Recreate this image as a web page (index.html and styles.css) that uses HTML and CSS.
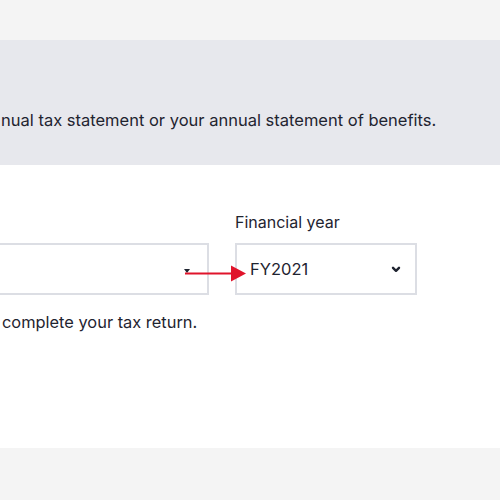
FILE: index.html
```html
<!DOCTYPE html>
<html lang="en">
<head>
<meta charset="utf-8">
<link rel="stylesheet" href="styles.css">
</head>
<body>
<div class="topbar"></div>
<section class="banner">
  <p class="banner-text">nual tax statement or your annual statement of benefits.</p>
</section>
<main class="main">
  <div class="form-row">
    <div class="field field-left">
      <span class="label">&nbsp;</span>
      <div class="select">
        <span class="select-value"></span>
        <span class="caret"></span>
      </div>
    </div>
    <div class="field field-right">
      <span class="label">Financial year</span>
      <div class="select">
        <span class="select-value">FY2021</span>
        <svg class="chevron" width="10" height="7" viewBox="0 0 10 7"><path d="M2 1.8 L5 4.8 L8 1.8" fill="none" stroke="#1f2430" stroke-width="2.4" stroke-linecap="round" stroke-linejoin="round"/></svg>
      </div>
    </div>
    <svg class="arrow" width="62" height="17" viewBox="0 0 62 17"><line x1="0" y1="8.5" x2="47" y2="8.5" stroke="#e0142b" stroke-width="2.2"/><polygon points="46,0.5 61,8.5 46,16.5" fill="#e0142b"/></svg>
  </div>
  <p class="help">complete your tax return.</p>
</main>
<div class="footer"></div>
</body>
</html>
```
FILE: styles.css
```css
html, body {
  margin: 0;
  padding: 0;
  background: #ffffff;
  font-family: Inter, "Noto Sans", sans-serif;
  color: #1f2430;
  overflow: hidden;
}
.topbar {
  height: 40px;
  background: #f4f4f4;
}
.banner {
  height: 125px;
  background: #e7e8ed;
  box-sizing: border-box;
  padding-top: 68px;
}
.banner-text {
  margin: 0;
  padding-left: 1px;
  font-size: 16.5px;
  line-height: 24px;
  white-space: nowrap;
}
.main {
  height: 283px;
  box-sizing: border-box;
  padding-top: 46px;
}
.form-row {
  position: relative;
  display: flex;
  gap: 26px;
  margin-left: -100px;
}
.field {
  display: flex;
  flex-direction: column;
  gap: 10px;
}
.field-left { width: 309px; }
.field-right { width: 182px; }
.label {
  font-size: 16px;
  line-height: 22px;
}
.select {
  height: 52px;
  box-sizing: border-box;
  border: 2px solid #dcdee4;
  display: flex;
  align-items: center;
  justify-content: space-between;
  padding: 0 14px 0 13px;
  font-size: 16.5px;
}
.select-value { line-height: 20px; }
.caret {
  width: 0;
  height: 0;
  border-left: 3px solid transparent;
  border-right: 3px solid transparent;
  border-top: 4px solid #1f2430;
  margin-right: 3px;
  margin-top: 4px;
}
.chevron { display: block; }
.arrow {
  position: absolute;
  left: 285px;
  top: 54px;
}
.help {
  margin: 16px 0 0 2px;
  font-size: 16.4px;
  line-height: 22px;
}
.footer {
  height: 52px;
  background: #f4f4f4;
}
```
